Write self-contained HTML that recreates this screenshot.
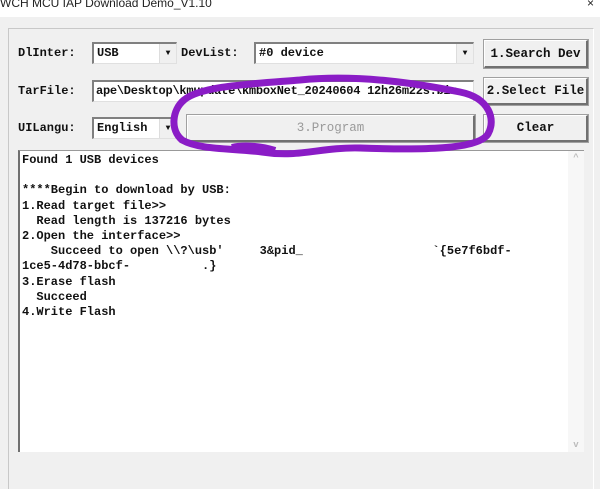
<!DOCTYPE html>
<html><head><style>
body{margin:0;width:600px;height:480px;background:#f0f0f0;position:relative;overflow:hidden;font-family:"Liberation Mono",monospace;font-weight:bold;font-size:12px;color:#111}
.a{position:absolute}
.title{left:0;top:0;width:600px;height:17px;background:#fff;font-family:"Liberation Sans",sans-serif;font-weight:normal;font-size:12px;line-height:6px;color:#222}
.frame{left:8px;top:28px;width:584px;height:460px;border:1px solid #c8c8c8;border-right-color:#fff;border-bottom:none}
.lbl{line-height:14px}
.fld{background:#fff;border-top:2px solid #808080;border-left:2px solid #808080;border-bottom:1px solid #e0e0e0;border-right:1px solid #e0e0e0;box-sizing:border-box;padding-left:3px;line-height:18px;white-space:nowrap;overflow:hidden}
.arr{position:absolute;right:0;top:0;width:16px;height:100%;background:#f0f0f0;border-left:1px solid #ddd;text-align:center;font-size:8px;line-height:20px}
.btn{background:#f0f0f0;border:1px solid #fff;border-right:2px solid #707070;border-bottom:2px solid #707070;box-sizing:border-box;text-align:center;outline:1px solid #a0a0a0;font-size:12.5px}
.log{left:18px;top:150px;width:566px;height:302px;background:#fff;border-left:2px solid #707070;border-top:1px solid #999;box-sizing:border-box;padding:2px 0 0 2px;line-height:15.2px;white-space:pre}
.sb{left:568px;top:151px;width:16px;height:301px;background:#f7f7f7}
</style></head><body>
<div class="a title">WCH MCU IAP Download Demo_V1.10<span style="position:absolute;right:6px;top:0;font-size:12px">×</span></div>
<div class="a frame"></div>

<div class="a lbl" style="left:18px;top:46px">DlInter:</div>
<div class="a fld" style="left:92px;top:42px;width:85px;height:22px">USB<div class="arr">▼</div></div>
<div class="a lbl" style="left:181px;top:46px">DevList:</div>
<div class="a fld" style="left:254px;top:42px;width:220px;height:22px">#0 device<div class="arr">▼</div></div>
<div class="a btn" style="left:484px;top:40px;width:104px;height:28px;line-height:26px">1.Search Dev</div>

<div class="a lbl" style="left:18px;top:84px">TarFile:</div>
<div class="a fld" style="left:92px;top:80px;width:382px;height:22px;padding-left:2px;letter-spacing:-0.25px">ape\Desktop\kmupdate\kmboxNet_20240604 12h26m22s.bin</div>
<div class="a btn" style="left:484px;top:78px;width:104px;height:27px;line-height:25px">2.Select File</div>

<div class="a lbl" style="left:18px;top:121px">UILangu:</div>
<div class="a fld" style="left:92px;top:117px;width:85px;height:22px">English<div class="arr">▼</div></div>
<div class="a btn" style="left:187px;top:115px;width:288px;height:27px;line-height:25px;color:#9a9a9a;font-weight:normal">3.Program</div>
<div class="a btn" style="left:484px;top:115px;width:104px;height:27px;line-height:25px">Clear</div>

<div class="a log">Found 1 USB devices

****Begin to download by USB:
1.Read target file&gt;&gt;
  Read length is 137216 bytes
2.Open the interface&gt;&gt;
    Succeed to open \\?\usb'     3&amp;pid_                  `{5e7f6bdf-
1ce5-4d78-bbcf-          .}
3.Erase flash
  Succeed
4.Write Flash</div>
<div class="a sb"><div style="position:absolute;top:2px;width:16px;text-align:center;color:#bbb;font-size:9px">^</div><div style="position:absolute;bottom:2px;width:16px;text-align:center;color:#bbb;font-size:9px">v</div></div>

<svg class="a" style="left:0;top:0" width="600" height="480">
<path d="M300,80 C360,74 420,84 460,92 C490,98 496,120 488,134 C478,150 420,150 360,148 C320,147 300,158 262,152 C230,148 200,150 182,140 C170,130 172,110 184,100 C200,86 250,84 300,80" fill="none" stroke="#8a1cc6" stroke-width="7" stroke-linecap="round"/>
<path d="M232,148 C245,145 262,147 275,151" fill="none" stroke="#8a1cc6" stroke-width="8"/>
</svg>
</body></html>
